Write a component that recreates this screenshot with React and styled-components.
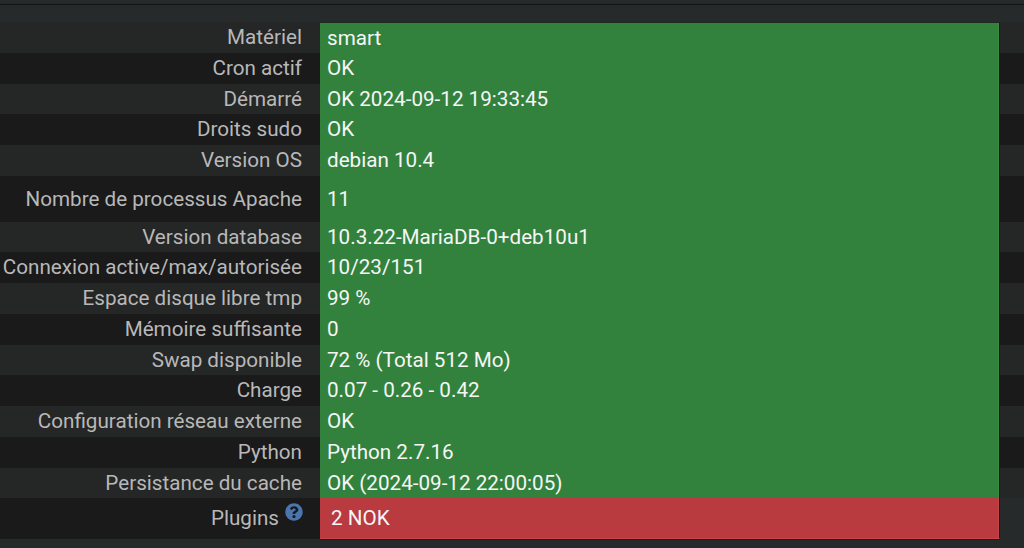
import React from "react";
import styled, { createGlobalStyle } from "styled-components";
import { FaQuestionCircle } from "react-icons/fa";

const GlobalStyle = createGlobalStyle`
  html, body {
    margin: 0;
    height: 548px;
    overflow: hidden;
    background: #272a2a;
  }
`;

const Page = styled.div`
  width: 1024px;
  height: 548px;
  overflow: hidden;
  font-family: Roboto, "Liberation Sans", sans-serif;
  font-size: 20.65px;
`;

const TopLine = styled.div`
  height: 1px;
  margin-top: 4px;
  margin-bottom: 17px;
  background: #121313;
`;

const Table = styled.div`
  display: flex;
  flex-direction: column;
`;

const Row = styled.div`
  display: grid;
  grid-template-columns: 320px 680px 24px;
  height: ${({ $height }) => $height}px;
  background: ${({ $odd }) => ($odd ? "#252626" : "#1a1a1a")};
`;

const Label = styled.div`
  display: flex;
  align-items: center;
  justify-content: flex-end;
  padding-right: 18px;
  padding-bottom: 1px;
  color: #b8b8b8;
  white-space: nowrap;
`;

const Value = styled.div`
  display: flex;
  align-items: center;
  padding-left: ${({ $bad }) => ($bad ? 11 : 7)}px;
  padding-bottom: 1px;
  color: #f6f6f6;
  white-space: nowrap;
  background: ${({ $bad }) => ($bad ? "#b93a3f" : "#32823e")};
  border-top: ${({ $first }) => ($first ? "1px solid #1c2a20" : "none")};
  border-bottom: ${({ $bad }) => ($bad ? "1px solid #c8454a" : "none")};
  border-right: 1px solid #1b1b1f;
  box-shadow: inset -1px 0 0 ${({ $bad }) => ($bad ? "#c8454a" : "#3a8c45")};
`;

const Gutter = styled.span`
  background: ${({ $page }) => ($page ? "#272a2a" : "transparent")};
`;

const BottomEdge = styled.div`
  width: 680px;
  height: 1px;
  margin-left: 320px;
  background: #1a1f20;
`;

const HelpIcon = styled(FaQuestionCircle)`
  width: 18px;
  height: 18px;
  margin-left: 6px;
  margin-right: -1px;
  margin-bottom: 13px;
  color: #4a76ad;
`;

const rows = [
  ["Matériel", "smart", 31],
  ["Cron actif", "OK", 31],
  ["Démarré", "OK 2024-09-12 19:33:45", 30],
  ["Droits sudo", "OK", 31],
  ["Version OS", "debian 10.4", 31],
  ["Nombre de processus Apache", "11", 46],
  ["Version database", "10.3.22-MariaDB-0+deb10u1", 30],
  ["Connexion active/max/autorisée", "10/23/151", 31],
  ["Espace disque libre tmp", "99 %", 31],
  ["Mémoire suffisante", "0", 31],
  ["Swap disponible", "72 % (Total 512 Mo)", 30],
  ["Charge", "0.07 - 0.26 - 0.42", 31],
  ["Configuration réseau externe", "OK", 31],
  ["Python", "Python 2.7.16", 31],
  ["Persistance du cache", "OK (2024-09-12 22:00:05)", 30],
];

export default function App() {
  return (
    <Page>
      <GlobalStyle />
      <TopLine />
      <Table>
        {rows.map(([label, value, height], i) => (
          <Row key={label} $height={height} $odd={i % 2 === 0}>
            <Label>{label}</Label>
            <Value $first={i === 0}>{value}</Value>
            <Gutter />
          </Row>
        ))}
        <Row $height={41}>
          <Label>
            Plugins
            <HelpIcon />
          </Label>
          <Value $bad>2 NOK</Value>
          <Gutter $page />
        </Row>
        <BottomEdge />
      </Table>
    </Page>
  );
}
